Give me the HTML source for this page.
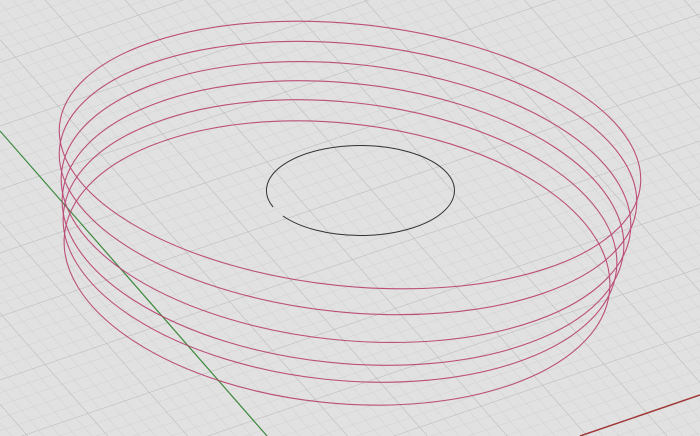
<!DOCTYPE html>
<html><head><meta charset="utf-8"><style>
html,body{margin:0;padding:0;background:#e1e1e1;}
svg{display:block}
</style></head><body>
<svg width="700" height="436" viewBox="0 0 700 436" xmlns="http://www.w3.org/2000/svg">
<defs>
<pattern id="minor" width="13" height="13" patternUnits="userSpaceOnUse" patternTransform="matrix(0.946,-0.323,0.659,0.752,339,518)">
<path d="M0 0H13M0 0V13" stroke="#d0d0d0" stroke-width="1" fill="none"/>
</pattern>
<pattern id="major" width="65" height="65" patternUnits="userSpaceOnUse" patternTransform="matrix(0.946,-0.323,0.659,0.752,339,518)">
<path d="M0 0H65M0 0V65" stroke="#bababa" stroke-width="1.1" fill="none"/>
</pattern>
</defs>
<rect width="700" height="436" fill="#e1e1e1"/>
<rect width="700" height="436" fill="url(#minor)"/>
<rect width="700" height="436" fill="url(#major)"/>
<line x1="0" y1="131" x2="267" y2="436" stroke="#3f8a3f" stroke-width="1.2"/>
<line x1="580" y1="436" x2="700" y2="395" stroke="#a03838" stroke-width="1.5"/>
<g fill="none" stroke="#b8406e" stroke-width="1.1" opacity="0.9">
<ellipse cx="350" cy="155" rx="292" ry="131" transform="rotate(6 350 155)"/>
<ellipse cx="348" cy="178" rx="290" ry="134" transform="rotate(6 348 178)"/>
<ellipse cx="346" cy="202" rx="286" ry="138" transform="rotate(6 346 202)"/>
<ellipse cx="343" cy="223" rx="282" ry="140" transform="rotate(6 343 223)"/>
<ellipse cx="340" cy="241" rx="278" ry="139" transform="rotate(6 340 241)"/>
<ellipse cx="337" cy="263" rx="274" ry="140" transform="rotate(6 337 263)"/>
</g>
<path d="M283 216 A94 45 0 1 0 273 207" fill="none" stroke="#333" stroke-width="1"/>
</svg>
</body></html>
